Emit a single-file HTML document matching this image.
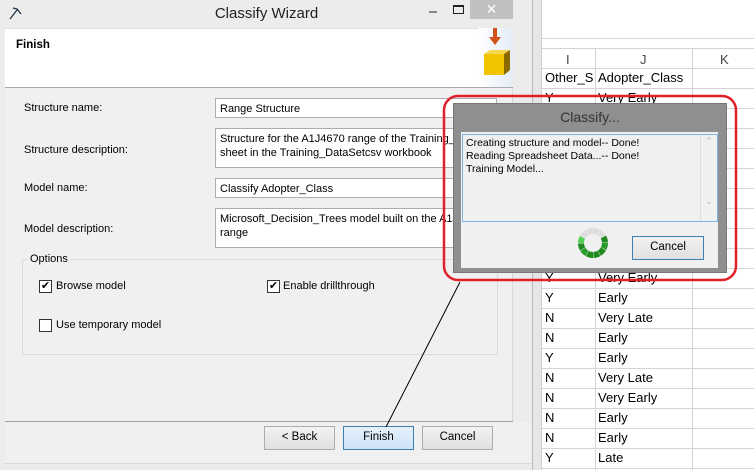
<!DOCTYPE html>
<html><head><style>
*{margin:0;padding:0;box-sizing:border-box}
body{width:754px;height:470px;overflow:hidden;background:#fff;font-family:"Liberation Sans",sans-serif;position:relative;font-size:11px;color:#000}
.a{position:absolute}
.tb{background:#fff;border:1px solid #abadb3;padding:3px 0 0 4px;font-size:11px;line-height:14px}
.btn{background:linear-gradient(#f2f2f2,#e0e0e0);border:1px solid #acacac;text-align:center;line-height:21px;font-size:11.5px}
.cb{width:13px;height:13px;border:1px solid #333;background:#fff;font-size:11px;line-height:11px;text-align:center}
.cell{position:absolute;font-size:13px;color:#000;font-family:"Liberation Sans",sans-serif}
</style></head><body>
<div class="a" style="left:531px;top:0;width:223px;height:470px;background:#fff"></div>
<div class="a" style="left:531px;top:0;width:11px;height:470px;background:#e6e6e6;border-right:1px solid #d0d0d0"></div>
<div class="a" style="left:542px;top:38px;width:212px;height:1px;background:#d4d4d4"></div>
<div class="cell" style="left:566px;top:52px;color:#444">I</div>
<div class="cell" style="left:640px;top:52px;color:#444">J</div>
<div class="cell" style="left:720px;top:52px;color:#444">K</div>
<div id="grid"></div>
<div class="a" style="left:0;top:0;width:533px;height:470px;background:#ececec;border-right:1px solid #bbb"></div>
<svg class="a" style="left:8px;top:6px" width="16" height="14"><path d="M2 13 L9 4 M5 2 L9 3 L13 8" stroke="#234" stroke-width="1.3" fill="none"/></svg>
<div class="a" style="left:0;top:5px;width:533px;text-align:center;font-size:15px;color:#222">Classify Wizard</div>
<div class="a" style="left:429px;top:11px;width:8px;height:2px;background:#888"></div>
<div class="a" style="left:453px;top:5px;width:11px;height:9px;border:1px solid #222;border-top-width:2px"></div>
<div class="a" style="left:470px;top:0;width:43px;height:19px;background:#c0c0c0;color:#fff;text-align:center;font-size:14px;line-height:18px">✕</div>
<div class="a" style="left:5px;top:28px;width:508px;height:60px;background:#fff;border-top:1px solid #ddd;border-bottom:1px solid #aaa"></div>
<div class="a" style="left:478px;top:28px;width:35px;height:59px;background:linear-gradient(90deg,#fff,#e4ecf7)"></div>
<div class="a" style="left:16px;top:39px;font-weight:bold;font-size:11.5px">Finish</div>
<svg class="a" style="left:480px;top:28px" width="32" height="58"><path d="M13 0 h4 v9 h4 l-6 8 l-6-8 h4z" fill="#d2531a"/><path d="M4 26 l6-4 h20 l-6 4z" fill="#f6d64a"/><path d="M24 26 l6-4 v20 l-6 5z" fill="#8a6a00"/><rect x="4" y="26" width="20" height="21" fill="#f2c400"/></svg>
<div class="a" style="left:5px;top:88px;width:508px;height:333px;background:#f0f0f0;border-right:1px solid #d8d8d8"></div>
<div class="a" style="left:24px;top:102px">Structure name:</div>
<div class="a" style="left:24px;top:144px">Structure description:</div>
<div class="a" style="left:24px;top:182px">Model name:</div>
<div class="a" style="left:24px;top:223px">Model description:</div>
<div class="a tb" style="left:215px;top:98px;width:282px;height:20px">Range Structure</div>
<div class="a tb" style="left:215px;top:128px;width:282px;height:40px">Structure for the A1J4670 range of the Training_<br>sheet in the Training_DataSetcsv workbook</div>
<div class="a tb" style="left:215px;top:178px;width:282px;height:20px">Classify Adopter_Class</div>
<div class="a tb" style="left:215px;top:208px;width:282px;height:40px">Microsoft_Decision_Trees model built on the A1J<br>range</div>
<div class="a" style="left:22px;top:259px;width:476px;height:96px;border:1px solid #dcdcdc"></div>
<div class="a" style="left:28px;top:253px;background:#f0f0f0;padding:0 2px">Options</div>
<div class="a cb" style="left:39px;top:280px">✔</div><div class="a" style="left:56px;top:280px">Browse model</div>
<div class="a cb" style="left:267px;top:280px">✔</div><div class="a" style="left:283px;top:280px">Enable drillthrough</div>
<div class="a cb" style="left:39px;top:319px"></div><div class="a" style="left:56px;top:319px">Use temporary model</div>
<div class="a" style="left:5px;top:421px;width:508px;height:1px;background:#a0a0a0"></div>
<div class="a" style="left:5px;top:422px;width:526px;height:42px;background:#f0f0f0;border-bottom:1px solid #d8d8d8"></div>
<div class="a btn" style="left:264px;top:426px;width:71px;height:24px">&lt; Back</div>
<div class="a btn" style="left:343px;top:426px;width:71px;height:24px;background:linear-gradient(#e5f1fb,#cde4f7);border-color:#3c7fb1">Finish</div>
<div class="a btn" style="left:422px;top:426px;width:71px;height:24px">Cancel</div>
<div class="a" style="left:453px;top:103px;width:274px;height:170px;background:#8f8f8f;border:1px solid #777"></div>
<div class="a" style="left:453px;top:109px;width:274px;text-align:center;font-size:14px;color:#333">Classify...</div>
<div class="a" style="left:461px;top:132px;width:257px;height:136px;background:#f0f0f0"></div>
<div class="a" style="left:462px;top:134px;width:256px;height:88px;background:#f0f0f0;border:1px solid #7eb4ea;padding:2px 3px;font-size:10.5px;line-height:13px">Creating structure and model-- Done!<br>Reading Spreadsheet Data...-- Done!<br>Training Model...</div>
<div class="a" style="left:700px;top:135px;width:17px;height:86px;border-left:1px solid #ddd;color:#bbb;font-size:9px;text-align:center;line-height:12px">⌃<br><br><br><br><br>⌄</div>
<div class="a btn" style="left:632px;top:236px;width:72px;height:24px;border-color:#3c7fb1">Cancel</div>
<svg class="a" style="left:577px;top:227px" width="32" height="32" id="sp"></svg>
<svg class="a" style="left:0;top:0" width="754" height="470"><rect x="444" y="96" width="292" height="184" rx="14" fill="none" stroke="#e0202a" stroke-width="2.5"/><line x1="460" y1="282" x2="386" y2="427" stroke="#000" stroke-width="1"/></svg>
<script>
var g='',rows=[['Other_S','Adopter_Class'],['Y','Very Early'],['','' ],['','' ],['','' ],['','' ],['','' ],['','' ],['','' ],['','' ],['Y','Very Early'],['Y','Early'],['N','Very Late'],['N','Early'],['Y','Early'],['N','Very Late'],['N','Very Early'],['N','Early'],['N','Early'],['Y','Late']];
for(var i=0;i<rows.length;i++){var y=68+i*20;g+='<div class="a" style="left:542px;top:'+(y+20)+'px;width:212px;height:1px;background:#d4d4d4"></div><div class="cell" style="left:545px;top:'+(y+2)+'px">'+rows[i][0]+'</div><div class="cell" style="left:598px;top:'+(y+2)+'px">'+rows[i][1]+'</div>';}
g+='<div class="a" style="left:542px;top:48px;width:212px;height:1px;background:#d4d4d4"></div><div class="a" style="left:542px;top:68px;width:212px;height:1px;background:#d4d4d4"></div>';
[595,692].forEach(function(x){g+='<div class="a" style="left:'+x+'px;top:48px;width:1px;height:422px;background:#d4d4d4"></div>'});
document.getElementById('grid').innerHTML=g;
var s='',cols=['#ddd','#ddd','#1f8a1f','#2a9a2a','#1f8a1f','#1f8a1f','#1f8a1f','#2a9a2a','#1f8a1f','#58d058','#ddd','#ddd'];
for(var k=0;k<12;k++){var a=(k*30-90)*Math.PI/180,b=((k+1)*30-92)*Math.PI/180,R=15,r=9,c=16;
s+='<path d="M'+(c+R*Math.cos(a))+' '+(c+R*Math.sin(a))+' A'+R+' '+R+' 0 0 1 '+(c+R*Math.cos(b))+' '+(c+R*Math.sin(b))+' L'+(c+r*Math.cos(b))+' '+(c+r*Math.sin(b))+' A'+r+' '+r+' 0 0 0 '+(c+r*Math.cos(a))+' '+(c+r*Math.sin(a))+'Z" fill="'+cols[k]+'"/>';}
document.getElementById('sp').innerHTML=s;
</script>
</body></html>
